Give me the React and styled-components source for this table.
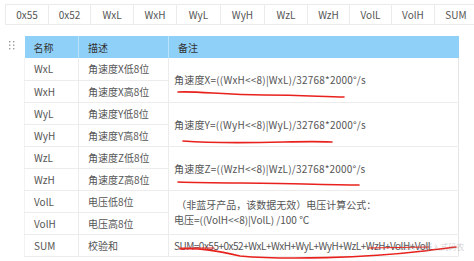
import React from "react";
import styled, { createGlobalStyle } from "styled-components";

const Global = createGlobalStyle`
  html, body { margin: 0; padding: 0; background: #fff; }
  body { font-family: "Noto Sans CJK SC", "Open Sans", sans-serif; color: #555; overflow: hidden; }
`;

const Page = styled.div`
  width: 474px;
  height: 261px;
  overflow: hidden;
  position: relative;
  padding-top: 4px;
  box-sizing: border-box;
`;

const Strip = styled.div`
  display: flex;
  margin-left: 5px;
  width: 480px;
`;

const StripCell = styled.div`
  flex: 0 0 ${p => p.$w}px;
  height: 21px;
  border: 1px solid #ebebeb;
  border-left-width: ${p => (p.$first ? 1 : 0)}px;
  display: flex;
  align-items: center;
  justify-content: center;
  font-size: 10px;
  color: #555;
  box-sizing: border-box;
`;

const TableArea = styled.div`
  display: flex;
  margin-top: 11px;
`;

const Handle = styled.div`
  width: 24px;
  display: flex;
  justify-content: center;
  padding-top: 5px;
  box-sizing: border-box;
`;

const TableWrap = styled.div`
  position: relative;
  width: 434px;
`;

const Table = styled.table`
  border-collapse: collapse;
  width: 434px;
  table-layout: fixed;
  font-size: 10px;
`;

const Th = styled.th`
  background: #8fd0f8;
  color: #333;
  font-weight: normal;
  text-align: left;
  height: 22px;
  padding: 0 0 0 9px;
  box-sizing: border-box;
  border-right: 1px solid #b9e2fb;
  &:last-child { border-right: none; }
`;

const Td = styled.td`
  height: 22px;
  padding: 0 0 0 ${p => (p.$note ? 5 : 9)}px;
  box-sizing: border-box;
  color: #555;
  border: 1px solid #ececec;
  border-top: none;
  border-left: ${p => (p.$firstCol ? "1px solid #f3f3f3" : "1px solid #ececec")};
  vertical-align: middle;
  white-space: nowrap;
  line-height: 15px;
  letter-spacing: ${p => p.$spacing || 0}px;
  &:last-child { border-right: 1px solid #e6e6e6; }
`;

const Overlay = styled.svg`
  position: absolute;
  left: 0;
  top: 0;
  pointer-events: none;
`;

const Watermark = styled.div`
  position: absolute;
  left: 394px;
  top: 241px;
  font-size: 8px;
  color: rgba(150, 150, 150, 0.45);
  font-family: "Noto Sans CJK SC", sans-serif;
  white-space: nowrap;
`;

const strip = ["0x55", "0x52", "WxL", "WxH", "WyL", "WyH", "WzL", "WzH", "VolL", "VolH", "SUM"];
const widths = [44, 42, 43, 43, 44, 44, 43, 42, 42, 43, 43];

const rows = [
  ["WxL", "角速度X低8位"],
  ["WxH", "角速度X高8位"],
  ["WyL", "角速度Y低8位"],
  ["WyH", "角速度Y高8位"],
  ["WzL", "角速度Z低8位"],
  ["WzH", "角速度Z高8位"],
  ["VolL", "电压低8位"],
  ["VolH", "电压高8位"],
];

const notes = [
  "角速度X=((WxH<<8)|WxL)/32768*2000°/s",
  "角速度Y=((WyH<<8)|WyL)/32768*2000°/s",
  "角速度Z=((WzH<<8)|WzL)/32768*2000°/s",
];

export default function App() {
  return (
    <Page>
      <Global />
      <Strip>
        {strip.map((s, i) => (
          <StripCell key={s} $w={widths[i]} $first={i === 0}>{s}</StripCell>
        ))}
      </Strip>
      <TableArea>
        <Handle>
          <svg width="6" height="9" viewBox="0 0 6 9">
            {[0, 1].map(c => [0, 1, 2].map(r => (
              <rect key={`${c}${r}`} x={c * 4} y={r * 3.5} width="1.4" height="1.4" fill="#9a9a9a" />
            )))}
          </svg>
        </Handle>
        <TableWrap>
          <Table>
            <colgroup>
              <col style={{ width: 54 }} />
              <col style={{ width: 90 }} />
              <col style={{ width: 290 }} />
            </colgroup>
            <thead>
              <tr>
                <Th>名称</Th>
                <Th>描述</Th>
                <Th>备注</Th>
              </tr>
            </thead>
            <tbody>
              {rows.map((r, i) => (
                <tr key={r[0]}>
                  <Td $firstCol>{r[0]}</Td>
                  <Td>{r[1]}</Td>
                  {i % 2 === 0 && i < 6 && (
                    <Td rowSpan={2} $note $spacing={0.2}>{notes[i / 2]}</Td>
                  )}
                  {i === 6 && (
                    <Td rowSpan={2} $note>
                      &nbsp;（非蓝牙产品，该数据无效）电压计算公式：<br />
                      电压=((VolH&lt;&lt;8)|VolL) /100 ℃
                    </Td>
                  )}
                </tr>
              ))}
              <tr>
                <Td $firstCol>SUM</Td>
                <Td>校验和</Td>
                <Td $note $spacing={-0.5}>SUM=0x55+0x52+WxL+WxH+WyL+WyH+WzL+WzH+VolH+VolL</Td>
              </tr>
            </tbody>
          </Table>
          <Overlay width="450" height="225" viewBox="0 0 450 225">
            <g fill="none" stroke="#e8211c" strokeWidth="1.6" strokeLinecap="round">
              <path d="M154 56 C 175 55, 200 59, 240 59 S 300 61, 320 61" />
              <path d="M159 105 C 185 107, 220 107, 260 106 S 300 106, 308 106" />
              <path d="M154 146 C 190 147, 240 147, 280 148 S 325 149, 335 149" />
              <path d="M156 213 C 175 212, 190 214, 216 220 C 260 224, 340 222, 400 215 C 415 213, 425 212, 432 211" />
              <path d="M156 212 L 190 212" strokeWidth="1" />
              <path d="M345 212 L 405 211" strokeWidth="1" />
            </g>
          </Overlay>
        </TableWrap>
      </TableArea>
      <Watermark>CSDN @嵌入式码农</Watermark>
    </Page>
  );
}
